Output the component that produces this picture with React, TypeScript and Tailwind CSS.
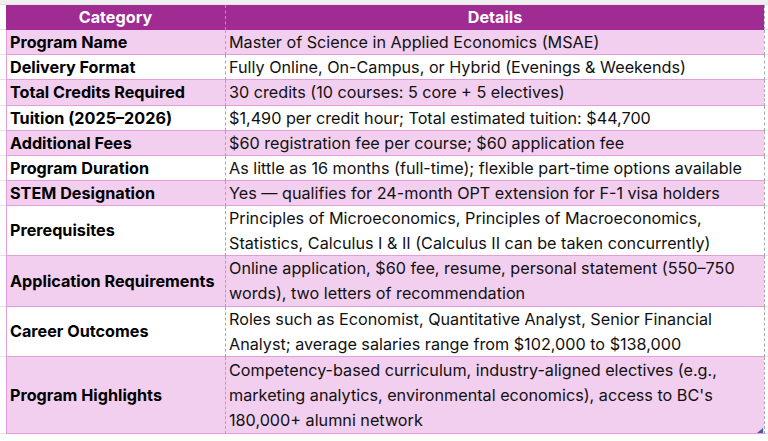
import React from "react";

type Row = { cat: string; lines: string[]; h: number; pink: boolean };

const rows: Row[] = [
  { cat: "Program Name", lines: ["Master of Science in Applied Economics (MSAE)"], h: 25, pink: true },
  { cat: "Delivery Format", lines: ["Fully Online, On-Campus, or Hybrid (Evenings & Weekends)"], h: 25, pink: false },
  { cat: "Total Credits Required", lines: ["30 credits (10 courses: 5 core + 5 electives)"], h: 26, pink: true },
  { cat: "Tuition (2025–2026)", lines: ["$1,490 per credit hour; Total estimated tuition: $44,700"], h: 25, pink: false },
  { cat: "Additional Fees", lines: ["$60 registration fee per course; $60 application fee"], h: 25, pink: true },
  { cat: "Program Duration", lines: ["As little as 16 months (full-time); flexible part-time options available"], h: 25, pink: false },
  { cat: "STEM Designation", lines: ["Yes — qualifies for 24-month OPT extension for F-1 visa holders"], h: 25, pink: true },
  {
    cat: "Prerequisites",
    lines: [
      "Principles of Microeconomics, Principles of Macroeconomics,",
      "Statistics, Calculus I & II (Calculus II can be taken concurrently)",
    ],
    h: 50,
    pink: false,
  },
  {
    cat: "Application Requirements",
    lines: ["Online application, $60 fee, resume, personal statement (550–750", "words), two letters of recommendation"],
    h: 51,
    pink: true,
  },
  {
    cat: "Career Outcomes",
    lines: [
      "Roles such as Economist, Quantitative Analyst, Senior Financial",
      "Analyst; average salaries range from $102,000 to $138,000",
    ],
    h: 50,
    pink: false,
  },
  {
    cat: "Program Highlights",
    lines: [
      "Competency-based curriculum, industry-aligned electives (e.g.,",
      "marketing analytics, environmental economics), access to BC's",
      "180,000+ alumni network",
    ],
    h: 77,
    pink: true,
  },
];

export default function App() {
  return (
    <div className="relative w-[768px] h-[441px] overflow-hidden bg-white font-['Inter',sans-serif] text-[16.2px] text-[#111111]">
      <div className="h-[5px] bg-[#efefef] border-b border-[#e3e3e3]" />
      {/* header */}
      <div className="flex h-[25px]">
        <div className="w-[6px] border-b border-[#e3e3e3]" />
        <div className="w-[219px] bg-[#a02b93] flex items-center justify-center font-bold text-white leading-[25px]">
          Category
        </div>
        <div className="w-[539px] bg-[#a02b93] border-l border-dashed border-[#c58bbd] flex items-center justify-center font-bold text-white leading-[25px]">
          Details
        </div>
        <div className="flex-1 border-l border-dashed border-[#a8a8a8] border-b border-b-[#e3e3e3] border-b-solid" />
      </div>
      {rows.map((r) => (
        <div key={r.cat} className="flex" style={{ height: r.h }}>
          <div className="w-[6px] border-b border-[#e3e3e3]" />
          <div
            className={`w-[219px] border-l border-b border-[#e39ddb] flex items-center pl-[3px] font-bold whitespace-nowrap leading-[25px] text-black ${
              r.pink ? "bg-[#f2ceef]" : "bg-white"
            }`}
          >
            {r.cat}
          </div>
          <div
            className={`relative w-[539px] border-b border-[#e39ddb] flex flex-col justify-center pl-[4px] whitespace-nowrap leading-[25px] ${
              r.pink ? "bg-[#f2ceef]" : "bg-white"
            }`}
          >
            <div className="absolute left-0 top-0 bottom-[-1px] border-l border-dashed border-[#a8a8a8]" />
            {r.lines.map((l) => (
              <div key={l}>{l}</div>
            ))}
          </div>
          <div className="flex-1 border-l border-dashed border-[#a8a8a8]">
            <div className="h-full border-b border-[#e3e3e3]" />
          </div>
        </div>
      ))}
      <div className="absolute left-[757px] top-[428px] w-0 h-0 border-l-[6px] border-l-transparent border-b-[5px] border-b-[#4b5aa6]" />
    </div>
  );
}
